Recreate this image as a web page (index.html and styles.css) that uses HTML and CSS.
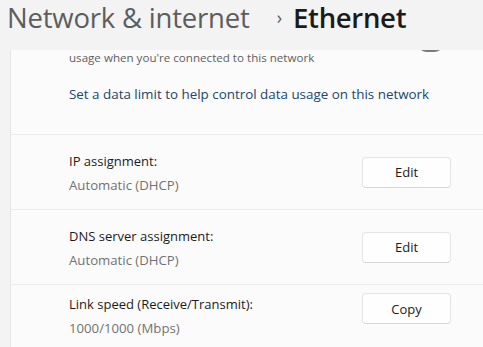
FILE: index.html
```html
<!DOCTYPE html>
<html>
<head>
<meta charset="utf-8">
<link rel="stylesheet" href="styles.css">
</head>
<body>
<div class="page">
  <header class="header">
    <span class="crumb">Network &amp; internet</span>
    <span class="sep">›</span>
    <span class="current">Ethernet</span>
  </header>
  <main class="card">
    <section class="top">
      <div class="toggle-row"><span class="toggle"></span></div>
      <p class="desc">usage when you're connected to this network</p>
      <p class="link">Set a data limit to help control data usage on this network</p>
    </section>
    <section class="row">
      <div class="info">
        <div class="label">IP assignment:</div>
        <div class="value">Automatic (DHCP)</div>
      </div>
      <button class="btn">Edit</button>
    </section>
    <section class="row">
      <div class="info">
        <div class="label">DNS server assignment:</div>
        <div class="value">Automatic (DHCP)</div>
      </div>
      <button class="btn">Edit</button>
    </section>
    <section class="row props">
      <div class="info">
        <div class="label">Link speed (Receive/Transmit):</div>
        <div class="value">1000/1000 (Mbps)</div>
      </div>
      <button class="btn">Copy</button>
    </section>
  </main>
</div>
</body>
</html>
```
FILE: styles.css
```css
html, body {
  margin: 0;
  padding: 0;
  background: #f3f3f3;
  font-family: "Open Sans", "Noto Sans", sans-serif;
  overflow: hidden;
}
.page {
  width: 483px;
  height: 347px;
  display: flex;
  flex-direction: column;
  overflow: hidden;
}
.header {
  flex: none;
  display: flex;
  align-items: center;
  padding-left: 7px;
  font-size: 27.5px;
  line-height: 1;
  padding-bottom: 14px;
  box-sizing: border-box;
  height: 50px;
}
.crumb {
  color: #5d5d5d;
  letter-spacing: -0.2px;
}
.sep {
  color: #5d5d5d;
  font-size: 18px;
  margin: 0 11px 0 27px;
  position: relative;
  top: -1px;
}
.current {
  color: #1b1b1b;
  font-weight: 600;
  letter-spacing: -0.3px;
}
.card {
  margin-left: 10px;
  flex: 1;
  background: #fbfbfb;
  border-left: 1px solid #e6e6e6;
  overflow: hidden;
}
.top {
  height: 84px;
  border-bottom: 1px solid #ebebeb;
  padding-left: 58px;
}
.toggle-row {
  height: 0;
  display: flex;
  justify-content: flex-end;
  padding-right: 39px;
}
.toggle {
  display: block;
  width: 27px;
  height: 20px;
  margin-top: -18px;
  border-radius: 10px;
  border-bottom: 2px solid #7a7a7a;
  box-sizing: border-box;
}
.desc {
  margin: 0;
  padding-top: 0;
  font-size: 11.6px;
  line-height: 15px;
  color: #5f5f5f;
}
.link {
  margin: 20px 0 0 0;
  font-size: 13.4px;
  line-height: 18px;
  color: #22466b;
}
.row {
  height: 74px;
  border-bottom: 1px solid #ebebeb;
  display: flex;
  align-items: center;
  padding-left: 58px;
  padding-right: 32px;
}
.row.props {
  align-items: flex-start;
  padding-top: 8px;
  border-bottom: none;
}
.info {
  flex: 1;
  display: flex;
  flex-direction: column;
  gap: 6px;
  padding-top: 2px;
}
.label {
  font-size: 13px;
  line-height: 18px;
  color: #1b1b1b;
}
.value {
  font-size: 13.2px;
  line-height: 18px;
  color: #727272;
}
.btn {
  width: 89px;
  height: 31px;
  background: #fefefe;
  border: 1px solid #e5e5e5;
  border-bottom-color: #d6d6d6;
  border-radius: 4px;
  font-family: inherit;
  font-size: 13px;
  color: #1b1b1b;
  padding: 0;
}
```
